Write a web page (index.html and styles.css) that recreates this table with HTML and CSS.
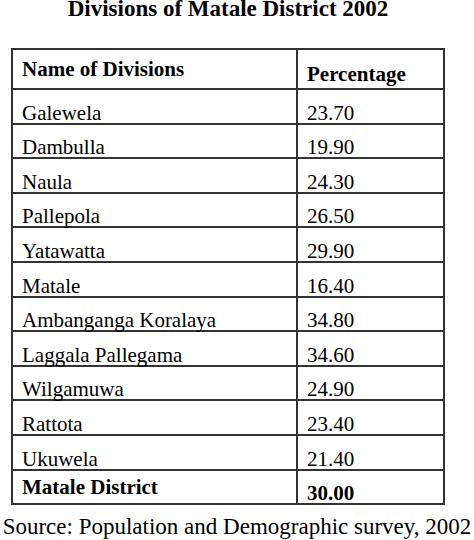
FILE: index.html
```html
<!DOCTYPE html>
<html>
<head>
<meta charset="utf-8">
<link rel="stylesheet" href="styles.css">
</head>
<body>
<div class="wrap">
  <h1 class="title">Divisions of Matale District 2002</h1>
  <table class="grid">
    <tr class="head">
      <td class="name name-head">Name of Divisions</td>
      <td class="pct pct-head">Percentage</td>
    </tr>
    <tr><td class="name">Galewela</td><td class="pct">23.70</td></tr>
    <tr><td class="name">Dambulla</td><td class="pct">19.90</td></tr>
    <tr><td class="name">Naula</td><td class="pct">24.30</td></tr>
    <tr><td class="name">Pallepola</td><td class="pct">26.50</td></tr>
    <tr><td class="name">Yatawatta</td><td class="pct">29.90</td></tr>
    <tr><td class="name">Matale</td><td class="pct">16.40</td></tr>
    <tr><td class="name">Ambanganga Koralaya</td><td class="pct">34.80</td></tr>
    <tr><td class="name">Laggala Pallegama</td><td class="pct">34.60</td></tr>
    <tr><td class="name">Wilgamuwa</td><td class="pct">24.90</td></tr>
    <tr><td class="name">Rattota</td><td class="pct">23.40</td></tr>
    <tr><td class="name">Ukuwela</td><td class="pct">21.40</td></tr>
    <tr class="total"><td class="name total-name">Matale District</td><td class="pct total-pct">30.00</td></tr>
  </table>
</div>
<p class="source">Source: Population and Demographic survey, 2002</p>
</body>
</html>
```
FILE: styles.css
```css
html, body {
  margin: 0;
  padding: 0;
  background: #fff;
}
body {
  font-family: "Liberation Serif", "Times New Roman", serif;
  color: #000;
  width: 474px;
  overflow: hidden;
}
.wrap {
  margin-left: 11px;
  width: 434px;
}
.title {
  margin: 0 0 31px 0;
  font-size: 23px;
  line-height: 17px;
  font-weight: bold;
  text-align: center;
  white-space: nowrap;
}
.grid {
  border-collapse: collapse;
  width: 434px;
  table-layout: fixed;
}
.grid td {
  border: 2px solid #333;
  font-size: 21px;
  line-height: 20px;
  vertical-align: bottom;
  padding: 0 0 0 9px;
  height: 32.6px;
  white-space: nowrap;
}
.grid .name {
  width: 274px;
}
.grid .name-head {
  font-weight: bold;
  height: 29px;
  padding-bottom: 9px;
}
.grid .pct-head {
  font-weight: bold;
  height: 34px;
  padding-bottom: 4px;
}
.grid .total-name {
  font-weight: bold;
  height: 26.6px;
  padding-bottom: 6px;
}
.grid .total-pct {
  font-weight: bold;
  padding-bottom: 0;
}
.source {
  margin: 9px 0 0 0;
  font-size: 23px;
  line-height: 26px;
  text-align: center;
  white-space: nowrap;
}
```
